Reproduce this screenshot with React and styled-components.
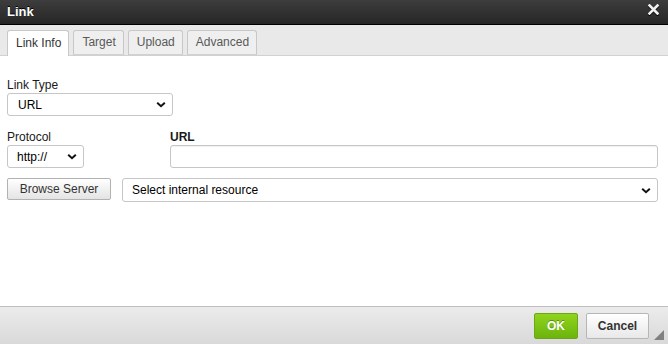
import React from "react";
import styled, { createGlobalStyle } from "styled-components";

const Global = createGlobalStyle`
  html, body { margin: 0; padding: 0; background: #fff; }
  body { font-family: "Liberation Sans", Arial, sans-serif; font-size: 12px; color: #333; }
  * { box-sizing: border-box; }
`;

const Dialog = styled.div`
  position: relative;
  width: 668px;
  height: 344px;
  display: flex;
  flex-direction: column;
  background: #fff;
  overflow: hidden;
`;

const TitleBar = styled.div`
  height: 25px;
  flex: none;
  display: flex;
  align-items: center;
  justify-content: space-between;
  padding: 0 9px 1px 7px;
  background: linear-gradient(#3d3d3d, #262626);
  border-bottom: 1px solid #000;
`;

const Title = styled.div`
  color: #fff;
  font-weight: bold;
  font-size: 13px;
  text-shadow: 0 -1px 0 #000;
`;

const Close = styled.svg`
  width: 11px;
  height: 11px;
  margin-top: -5px;
  filter: drop-shadow(0 1px 0 #000);
`;

const TabStrip = styled.div`
  height: 31px;
  flex: none;
  display: flex;
  align-items: flex-end;
  gap: 4px;
  padding: 0 7px;
  background: #e9e9e9;
  border-bottom: 1px solid #d1d1d1;
`;

const Tab = styled.div`
  height: ${(p) => (p.$active ? "26px" : "25px")};
  margin-bottom: ${(p) => (p.$active ? "-1px" : "0")};
  display: flex;
  align-items: center;
  padding: 0 7px 2px 8px;
  border: 1px solid #c8c8c8;
  border-bottom: ${(p) => (p.$active ? "none" : "1px solid #d1d1d1")};
  border-radius: 3px 3px 0 0;
  background: ${(p) => (p.$active ? "#fff" : "#efefef")};
  color: ${(p) => (p.$active ? "#333" : "#595959")};
  font-size: 12px;
`;

const Content = styled.div`
  flex: 1;
  display: flex;
  flex-direction: column;
  padding: 22px 10px 0 7px;
`;

const Label = styled.div`
  line-height: 15px;
  height: 15px;
  color: #1a1a1a;
  font-weight: ${(p) => (p.$bold ? "bold" : "normal")};
`;

const Select = styled.div`
  width: ${(p) => p.$width || "100%"};
  height: ${(p) => p.$height || "23px"};
  display: flex;
  align-items: center;
  justify-content: space-between;
  padding: 0 6px 0 ${(p) => p.$pad || "10px"};
  border: 1px solid #c6c6c6;
  border-radius: 3px;
  background: #fff;
  color: #000;
  font-size: 12px;
`;

const Chevron = styled.svg`
  width: 10px;
  height: 7px;
  flex: none;
`;

const Field = styled.div`
  display: flex;
  flex-direction: column;
`;

const Grid = styled.div`
  display: grid;
  grid-template-columns: 77px 1fr;
  column-gap: 86px;
  margin-top: 14px;
`;

const TextInput = styled.div`
  height: 23px;
  border: 1px solid #c6c6c6;
  border-radius: 3px;
  box-shadow: inset 0 1px 1px rgba(0,0,0,0.06);
  background: #fff;
`;

const BrowseRow = styled.div`
  display: flex;
  align-items: flex-start;
  gap: 11px;
  margin-top: 10px;
`;

const Button = styled.div`
  height: 22px;
  width: 104px;
  flex: none;
  display: flex;
  align-items: center;
  justify-content: center;
  border: 1px solid #b2b2b2;
  border-radius: 2px;
  background: linear-gradient(#fff, #e4e4e4);
  color: #333;
  font-size: 12px;
`;

const Footer = styled.div`
  height: 38px;
  flex: none;
  display: flex;
  justify-content: flex-end;
  align-items: flex-start;
  gap: 8px;
  padding: 6px 19px 0 0;
  background: linear-gradient(#ebebeb, #d9d9d9);
  border-top: 1px solid #bfbfbf;
`;

const DialogButton = styled.div`
  height: 26px;
  width: ${(p) => p.$width};
  display: flex;
  align-items: center;
  justify-content: center;
  border-radius: 2px;
  font-weight: bold;
  font-size: 12px;
  border: 1px solid ${(p) => (p.$ok ? "#6ea617" : "#b6b6b6")};
  background: ${(p) => (p.$ok ? "linear-gradient(#8fd41c, #6cb40d)" : "linear-gradient(#fff, #e8e8e8)")};
  color: ${(p) => (p.$ok ? "#fff" : "#333")};
  text-shadow: ${(p) => (p.$ok ? "0 -1px 0 #5a8d0f" : "none")};
`;

const Grip = styled.div`
  position: absolute;
  right: 4px;
  bottom: 4px;
  width: 0;
  height: 0;
  border-left: 10px solid transparent;
  border-bottom: 10px solid #808080;
`;

const ChevronIcon = () => (
  <Chevron viewBox="0 0 10 7">
    <path d="M1.2 1.8 L5 5.2 L8.8 1.8" fill="none" stroke="#111" strokeWidth="2" />
  </Chevron>
);

export default function App() {
  return (
    <Dialog>
      <Global />
      <TitleBar>
        <Title>Link</Title>
        <Close viewBox="0 0 11 11">
          <path d="M1.5 1.5 L9.5 9.5 M9.5 1.5 L1.5 9.5" stroke="#f0f0f0" strokeWidth="2.6" strokeLinecap="square" />
        </Close>
      </TitleBar>
      <TabStrip>
        <Tab $active>Link Info</Tab>
        <Tab>Target</Tab>
        <Tab>Upload</Tab>
        <Tab>Advanced</Tab>
      </TabStrip>
      <Content>
        <Label>Link Type</Label>
        <Select $width="166px">
          <span>URL</span>
          <ChevronIcon />
        </Select>
        <Grid>
          <Field>
            <Label>Protocol</Label>
            <Select $width="77px" $pad="9px">
              <span>http://</span>
              <ChevronIcon />
            </Select>
          </Field>
          <Field>
            <Label $bold>URL</Label>
            <TextInput />
          </Field>
        </Grid>
        <BrowseRow>
          <Button>Browse Server</Button>
          <Select $height="24px" $pad="9px">
            <span>Select internal resource</span>
            <ChevronIcon />
          </Select>
        </BrowseRow>
      </Content>
      <Footer>
        <DialogButton $ok $width="44px">OK</DialogButton>
        <DialogButton $width="63px">Cancel</DialogButton>
      </Footer>
      <Grip />
    </Dialog>
  );
}
